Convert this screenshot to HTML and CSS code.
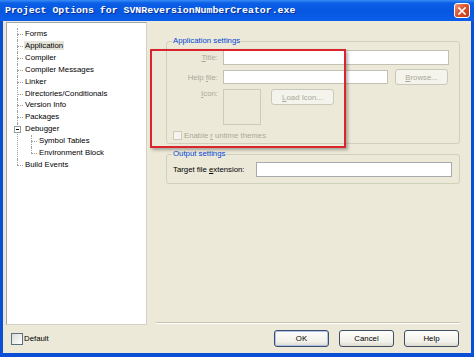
FILE: index.html
```html
<!DOCTYPE html>
<html lang="en">
  <head>
    <meta charset="UTF-8" />
    <meta name="viewport" content="width=device-width, initial-scale=1.0" />
    <title>Project Options for SVNReversionNumberCreator.exe</title>
    <link rel="stylesheet" href="styles.css">
  </head>
  <body>
    <div class="window">
      <div class="titlebar">
        <span class="title">Project Options for SVNReversionNumberCreator.exe</span>
        <span class="close">
          <svg width="8" height="8" viewBox="0 0 8 8">
            <path d="M1 1 L7 7 M7 1 L1 7" stroke="#fff" stroke-width="1.6" stroke-linecap="square" />
          </svg>
        </span>
      </div>

      <div class="frame">
        <div class="main">
          <ul class="tree">
            <li class="node">Forms</li>
            <li class="node"><span class="selected">Application</span></li>
            <li class="node">Compiler</li>
            <li class="node">Compiler Messages</li>
            <li class="node">Linker</li>
            <li class="node">Directories/Conditionals</li>
            <li class="node">Version Info</li>
            <li class="node">Packages</li>
            <li class="node open">
              <span class="toggle"></span>Debugger
              <ul class="subtree">
                <li class="node">Symbol Tables</li>
                <li class="node last">Environment Block</li>
              </ul>
            </li>
            <li class="node last">Build Events</li>
          </ul>

          <div class="pages">
            <fieldset class="group app-group">
              <legend>Application settings</legend>
              <div class="form-grid">
                <label class="label disabled"><u>T</u>itle:</label>
                <input class="field" type="text" disabled />

                <label class="label disabled">Help <u>f</u>ile:</label>
                <div class="row">
                  <input class="field help-field" type="text" disabled />
                  <button class="btn browse" disabled><u>B</u>rowse...</button>
                </div>

                <label class="label label-top disabled"><u>I</u>con:</label>
                <div class="row row-top">
                  <div class="icon-box"></div>
                  <button class="btn load-icon" disabled><u>L</u>oad Icon...</button>
                </div>

                <label class="check disabled span-all">
                  <span class="box"></span>Enable <u>r</u>untime themes
                </label>
              </div>
            </fieldset>

            <fieldset class="group out-group">
              <legend>Output settings</legend>
              <div class="row">
                <label class="label">Target file <u>e</u>xtension:</label>
                <input class="field ext-field" type="text" />
              </div>
            </fieldset>

            <div class="separator"></div>

            <div class="highlight"></div>
          </div>
        </div>

        <div class="footer">
          <label class="check default">
            <span class="box"></span>Default
          </label>
          <div class="buttons">
            <button class="btn ok">OK</button>
            <button class="btn">Cancel</button>
            <button class="btn">Help</button>
          </div>
        </div>
      </div>
    </div>
  </body>
</html>
```

FILE: styles.css
```css
body {
  margin: 0;
  font-family: "Liberation Sans", Arial, sans-serif;
  font-size: 7.8px;
  color: #000;
  background: #fff;
}
.window {
  width: 474px;
  height: 357px;
  display: flex;
  flex-direction: column;
}
.titlebar {
  height: 21px;
  flex: none;
  display: flex;
  align-items: center;
  justify-content: space-between;
  padding: 0 4px 0 5px;
  background: linear-gradient(#3a8cf6 0, #0b5fe6 3px, #0656e0 55%, #0a5fea 100%);
}
.title {
  font-family: "Liberation Mono", "Courier New", monospace;
  font-weight: bold;
  font-size: 9.9px;
  color: #fff;
  text-shadow: 1px 1px 0 #0a2f8f;
  white-space: nowrap;
}
.close {
  width: 16px;
  height: 15px;
  box-sizing: border-box;
  border: 1px solid #fff;
  border-radius: 3px;
  background: linear-gradient(135deg, #ef9b7f, #d9552f 45%, #c13a16);
  display: flex;
  align-items: center;
  justify-content: center;
}
.frame {
  flex: 1;
  display: flex;
  flex-direction: column;
  background: #ece9d8;
  border-left: 3px solid #0a4fd6;
  border-right: 3px solid #0a4fd6;
  border-bottom: 4px solid #0a4fd6;
}
.main {
  height: 303px;
  display: flex;
  padding: 1px 0 0 3px;
}

/* tree */
.tree {
  width: 141px;
  height: 303px;
  box-sizing: border-box;
  margin: 0;
  padding: 5px 0 0 0;
  list-style: none;
  background: #fff;
  border: 1px solid #7f9db9;
  border-color: #a7a6aa #d4d0c8 #d4d0c8 #a7a6aa;
}
.tree ul {
  list-style: none;
  margin: 0;
  padding: 0;
}
.node {
  position: relative;
  padding-left: 18px;
  line-height: 11.9px;
  white-space: nowrap;
}
.node::before {
  content: "";
  position: absolute;
  left: 10px;
  top: 6px;
  width: 6px;
  border-top: 1px dotted #a0a0a0;
}
.node::after {
  content: "";
  position: absolute;
  left: 10px;
  top: 0;
  bottom: 0;
  border-left: 1px dotted #a0a0a0;
}
.node.last::after {
  bottom: auto;
  height: 6px;
}
.subtree .node {
  padding-left: 14px;
}
.subtree .node::before,
.subtree .node::after {
  left: 6px;
}
.open::before {
  display: none;
}
.toggle {
  position: absolute;
  left: 7px;
  top: 3px;
  width: 7px;
  height: 7px;
  box-sizing: border-box;
  border: 1px solid #919b9c;
  background: #fff;
  z-index: 1;
}
.toggle::after {
  content: "";
  position: absolute;
  left: 1px;
  top: 2px;
  width: 3px;
  border-top: 1px solid #000;
}
.selected {
  background: #e6e4da;
  padding: 0 1px;
  margin-left: -1px;
}

/* pages */
.pages {
  position: relative;
  flex: 1;
  display: flex;
  flex-direction: column;
  padding: 14px 11px 1px 19px;
}
.group {
  margin: 0;
  border: 1px solid #d0d0bf;
  border-radius: 3px;
  min-width: 0;
}
.group legend {
  padding: 0 1px;
  margin-left: -1px;
  line-height: 10px;
  color: #0046d5;
}
.app-group {
  padding: 4px 10px 3px 6px;
}
.out-group {
  margin-top: 5px;
  padding: 3px 7px 6px 6px;
}
.form-grid {
  display: grid;
  grid-template-columns: 45px 1fr;
  column-gap: 5px;
  row-gap: 4px;
  align-items: center;
}
.row {
  display: flex;
  align-items: center;
  gap: 7px;
}
.row-top {
  align-items: flex-start;
  gap: 10px;
}
.label {
  text-align: right;
  white-space: nowrap;
}
.label-top {
  align-self: start;
  line-height: 9px;
}
.out-group .label {
  text-align: left;
  width: 79px;
  flex: none;
  margin-right: -3px;
}
.disabled {
  color: #aca899;
}
.field {
  height: 15px;
  box-sizing: border-box;
  margin: 0;
  padding: 0 2px;
  border: 1px solid #c3c1b4;
  background: #fff;
  font: inherit;
}
.help-field {
  width: 165px;
  height: 14px;
}
.ext-field {
  flex: 1;
  border-color: #a8aab0;
}
.icon-box {
  width: 38px;
  height: 36px;
  box-sizing: border-box;
  border: 1px solid #cdcabb;
}
.span-all {
  grid-column: 1 / 3;
  margin-top: 2px;
}
.check {
  display: flex;
  align-items: center;
  gap: 2px;
  white-space: nowrap;
}
.check .box {
  width: 9px;
  height: 9px;
  box-sizing: border-box;
  border: 1px solid #cdcabb;
  background: #f5f4ee;
}

/* buttons */
.btn {
  height: 17px;
  width: 55px;
  box-sizing: border-box;
  margin: 0;
  padding: 0;
  border: 1px solid #3f4e64;
  border-radius: 3px;
  background: linear-gradient(#fdfdfb, #f2f1ea 70%, #dedbcd);
  font: inherit;
  color: #000;
}
.btn:disabled {
  border-color: #cac8bb;
  background: #f4f3ec;
  color: #aca899;
}
.browse {
  width: 53px;
  height: 16px;
}
.load-icon {
  width: 63px;
  height: 16px;
}
.ok {
  box-shadow: inset 0 0 0 1px #a9c3ee;
}

.separator {
  margin: auto 0 0 -10px;
  border-top: 1px solid #c5c2b2;
  border-bottom: 1px solid #fff;
}

/* red marker drawn over the settings */
.highlight {
  position: absolute;
  left: 3px;
  top: 27px;
  width: 196px;
  height: 99px;
  box-sizing: border-box;
  border: 2px solid #d9262c;
  box-shadow: 2px 2px 3px rgba(0, 0, 0, 0.3);
}

/* footer */
.footer {
  flex: 1;
  display: flex;
  align-items: center;
  justify-content: space-between;
  padding: 0 12px 1px 8px;
}
.default .box {
  width: 12px;
  height: 12px;
  border-color: #5d6f86;
  background: linear-gradient(135deg, #dcdcd7, #fff);
}
.default {
  gap: 1px;
}
.buttons {
  display: flex;
  gap: 10px;
}
```
